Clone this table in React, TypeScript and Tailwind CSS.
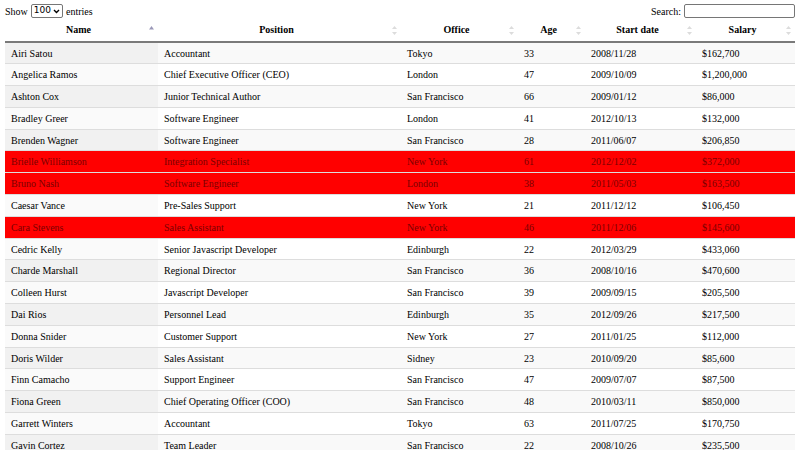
import React from "react";

type Row = [string, string, string, string, string, string, boolean?];

const rows: Row[] = [
  ["Airi Satou", "Accountant", "Tokyo", "33", "2008/11/28", "$162,700"],
  ["Angelica Ramos", "Chief Executive Officer (CEO)", "London", "47", "2009/10/09", "$1,200,000"],
  ["Ashton Cox", "Junior Technical Author", "San Francisco", "66", "2009/01/12", "$86,000"],
  ["Bradley Greer", "Software Engineer", "London", "41", "2012/10/13", "$132,000"],
  ["Brenden Wagner", "Software Engineer", "San Francisco", "28", "2011/06/07", "$206,850"],
  ["Brielle Williamson", "Integration Specialist", "New York", "61", "2012/12/02", "$372,000", true],
  ["Bruno Nash", "Software Engineer", "London", "38", "2011/05/03", "$163,500", true],
  ["Caesar Vance", "Pre-Sales Support", "New York", "21", "2011/12/12", "$106,450"],
  ["Cara Stevens", "Sales Assistant", "New York", "46", "2011/12/06", "$145,600", true],
  ["Cedric Kelly", "Senior Javascript Developer", "Edinburgh", "22", "2012/03/29", "$433,060"],
  ["Charde Marshall", "Regional Director", "San Francisco", "36", "2008/10/16", "$470,600"],
  ["Colleen Hurst", "Javascript Developer", "San Francisco", "39", "2009/09/15", "$205,500"],
  ["Dai Rios", "Personnel Lead", "Edinburgh", "35", "2012/09/26", "$217,500"],
  ["Donna Snider", "Customer Support", "New York", "27", "2011/01/25", "$112,000"],
  ["Doris Wilder", "Sales Assistant", "Sidney", "23", "2010/09/20", "$85,600"],
  ["Finn Camacho", "Support Engineer", "San Francisco", "47", "2009/07/07", "$87,500"],
  ["Fiona Green", "Chief Operating Officer (COO)", "San Francisco", "48", "2010/03/11", "$850,000"],
  ["Garrett Winters", "Accountant", "Tokyo", "63", "2011/07/25", "$170,750"],
  ["Gavin Cortez", "Team Leader", "San Francisco", "22", "2008/10/26", "$235,500"],
];

const headers = ["Name", "Position", "Office", "Age", "Start date", "Salary"];
const widths = ["w-[153px]", "w-[243px]", "w-[117px]", "w-[67px]", "w-[111px]", "w-[99px]"];

function SortBoth() {
  return (
    <svg width="7" height="11" viewBox="0 0 7 11" className="absolute right-[3px] top-[5px]">
      <path d="M3.5 1 L6 4 L1 4 Z" fill="#dcdcdc" />
      <path d="M3.5 10 L6 7 L1 7 Z" fill="#dcdcdc" />
    </svg>
  );
}

function SortAsc() {
  return (
    <svg width="7" height="11" viewBox="0 0 7 11" className="absolute right-[3px] top-[4px]">
      <path d="M3.5 2 L6 5.5 L1 5.5 Z" fill="#9a98b8" />
    </svg>
  );
}

export default function App() {
  return (
    <div
      className="w-[800px] h-[450px] overflow-hidden bg-white px-[5px] text-[10px] text-black"
      style={{ fontFamily: '"Liberation Serif", "Times New Roman", serif' }}
    >
      <div className="flex items-center justify-between h-[20px] pt-[2px]">
        <div className="flex items-center gap-[3px]">
          <span>Show</span>
          <div className="flex items-center h-[14px] border border-[#767676] rounded-[2px] px-[2px] gap-[2px] bg-white">
            <span className="text-[9px]" style={{ fontFamily: '"DejaVu Sans", sans-serif' }}>100</span>
            <svg width="7" height="5" viewBox="0 0 7 5">
              <path d="M1 1 L3.5 3.5 L6 1" stroke="#000" strokeWidth="1.4" fill="none" />
            </svg>
          </div>
          <span>entries</span>
        </div>
        <div className="flex items-center gap-[3px]">
          <span>Search:</span>
          <div className="w-[111px] h-[14px] border border-[#767676] rounded-[2px] bg-white" />
        </div>
      </div>
      <table className="table-fixed border-collapse w-[790px]">
        <colgroup>
          {widths.map((w, i) => (
            <col key={i} className={w} />
          ))}
        </colgroup>
        <thead>
          <tr className="h-[22px]">
            {headers.map((h, i) => (
              <th
                key={h}
                className="relative font-bold text-center pl-[6px] pr-[12px] pt-0 pb-[3px] border-b-2 border-[#7a7a7a]"
              >
                {h}
                {i === 0 ? <SortAsc /> : <SortBoth />}
              </th>
            ))}
          </tr>
        </thead>
        <tbody>
          {rows.map((r, idx) => {
            const odd = idx % 2 === 0;
            const red = r[6];
            const rowBg = red ? "bg-[#ff0000] text-[#7a0000]" : odd ? "bg-[#f9f9f9]" : "bg-white";
            return (
              <tr key={r[0]} className={`h-[21.8px] ${rowBg} ${idx > 0 ? "border-t border-[#dddddd]" : ""}`}>
                {r.slice(0, 6).map((c, ci) => (
                  <td
                    key={ci}
                    className={`px-[6px] py-0 whitespace-nowrap ${
                      ci === 0 && !red ? (odd ? "bg-[#f1f1f1]" : "bg-[#fafafa]") : ""
                    }`}
                  >
                    {c as string}
                  </td>
                ))}
              </tr>
            );
          })}
        </tbody>
      </table>
    </div>
  );
}
